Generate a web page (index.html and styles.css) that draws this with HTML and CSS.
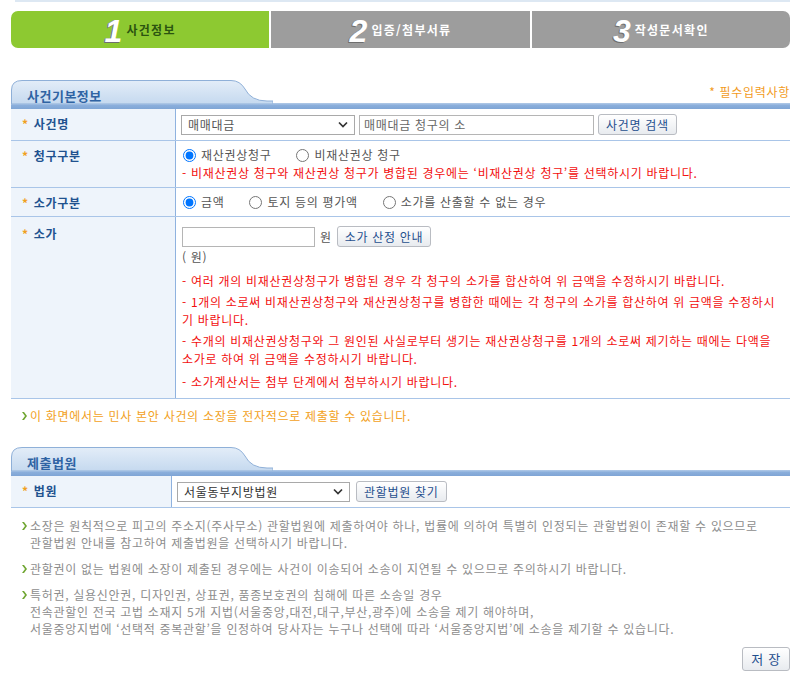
FILE: index.html
```html
<!DOCTYPE html>
<html lang="ko">
<head>
    <meta charset="UTF-8">
    <title>사건정보</title>
    <link rel="stylesheet" href="styles.css">
</head>
<body>
<div class="page">
    <div class="topline"></div>

    <div class="steps">
        <div class="step step-on"><span class="num">1</span><span class="step-label">사건정보</span></div>
        <div class="step"><span class="num">2</span><span class="step-label">입증/첨부서류</span></div>
        <div class="step"><span class="num">3</span><span class="step-label">작성문서확인</span></div>
    </div>

    <!-- 사건기본정보 -->
    <div class="sec-head">
        <svg class="tab-bg" width="262" height="24" viewBox="0 0 262 24">
            <defs>
                <linearGradient id="tabg" x1="0" y1="0" x2="0" y2="1">
                    <stop offset="0" stop-color="#e3edf8"/>
                    <stop offset="1" stop-color="#c5d9ef"/>
                </linearGradient>
            </defs>
            <path d="M0.5,24 L0.5,10 Q0.5,0.5 11,0.5 L220,0.5 Q229,0.5 234,9 Q240,21 256,21 L262,21 L262,24 Z" fill="url(#tabg)" stroke="#8fb0d8"/>
        </svg>
        <span class="tab-title">사건기본정보</span>
        <span class="required">* 필수입력사항</span>
    </div>
    <div class="sec-bar"></div>
    <table class="form">
        <tr>
            <th class="w1"><i>*</i>사건명</th>
            <td class="mid">
                <div class="line">
                    <div class="select s-case"><span>매매대금</span><svg width="10" height="7" viewBox="0 0 10 7"><path d="M1 1.5 L5 5.5 L9 1.5" fill="none" stroke="#333" stroke-width="1.7"/></svg></div>
                    <div class="input i-case">매매대금 청구의 소</div>
                    <button class="btn">사건명 검색</button>
                </div>
            </td>
        </tr>
        <tr>
            <th><i>*</i>청구구분</th>
            <td>
                <div class="line">
                    <label class="radio"><input type="radio" name="claim" checked>재산권상청구</label>
                    <label class="radio"><input type="radio" name="claim">비재산권상 청구</label>
                </div>
                <p class="warn">- 비재산권상 청구와 재산권상 청구가 병합된 경우에는 ‘비재산권상 청구’를 선택하시기 바랍니다.</p>
            </td>
        </tr>
        <tr>
            <th><i>*</i>소가구분</th>
            <td>
                <div class="line">
                    <label class="radio"><input type="radio" name="kind" checked>금액</label>
                    <label class="radio"><input type="radio" name="kind">토지 등의 평가액</label>
                    <label class="radio"><input type="radio" name="kind">소가를 산출할 수 없는 경우</label>
                </div>
            </td>
        </tr>
        <tr>
            <th class="top"><i>*</i>소가</th>
            <td class="amount">
                <div class="line">
                    <div class="input i-amount"></div>
                    <span class="unit">원</span>
                    <button class="btn">소가 산정 안내</button>
                </div>
                <p class="plain">( 원)</p>
                <p class="warn w-first">- 여러 개의 비재산권상청구가 병합된 경우 각 청구의 소가를 합산하여 위 금액을 수정하시기 바랍니다.</p>
                <p class="warn">- 1개의 소로써 비재산권상청구와 재산권상청구를 병합한 때에는 각 청구의 소가를 합산하여 위 금액을 수정하시기 바랍니다.</p>
                <p class="warn">- 수개의 비재산권상청구와 그 원인된 사실로부터 생기는 재산권상청구를 1개의 소로써 제기하는 때에는 다액을 소가로 하여 위 금액을 수정하시기 바랍니다.</p>
                <p class="warn w-last">- 소가계산서는 첨부 단계에서 첨부하시기 바랍니다.</p>
            </td>
        </tr>
    </table>

    <p class="note orange"><svg class="arr" width="5" height="8" viewBox="0 0 5 8"><path d="M0 0 H2 L5 4 L2 8 H0 L3 4 Z" fill="#6ea52f"/></svg>이 화면에서는 민사 본안 사건의 소장을 전자적으로 제출할 수 있습니다.</p>

    <!-- 제출법원 -->
    <div class="sec-head sec2">
        <svg class="tab-bg" width="262" height="24" viewBox="0 0 262 24">
            <path d="M0.5,24 L0.5,10 Q0.5,0.5 11,0.5 L220,0.5 Q229,0.5 234,9 Q240,21 256,21 L262,21 L262,24 Z" fill="url(#tabg)" stroke="#8fb0d8"/>
        </svg>
        <span class="tab-title">제출법원</span>
    </div>
    <div class="sec-bar"></div>
    <table class="form">
        <tr>
            <th class="w2"><i>*</i>법원</th>
            <td class="mid">
                <div class="line">
                    <div class="select s-court"><span>서울동부지방법원</span><svg width="10" height="7" viewBox="0 0 10 7"><path d="M1 1.5 L5 5.5 L9 1.5" fill="none" stroke="#333" stroke-width="1.7"/></svg></div>
                    <button class="btn">관할법원 찾기</button>
                </div>
            </td>
        </tr>
    </table>

    <div class="notes">
        <p class="note gray"><svg class="arr" width="5" height="8" viewBox="0 0 5 8"><path d="M0 0 H2 L5 4 L2 8 H0 L3 4 Z" fill="#6ea52f"/></svg><span>소장은 원칙적으로 피고의 주소지(주사무소) 관할법원에 제출하여야 하나, 법률에 의하여 특별히 인정되는 관할법원이 존재할 수 있으므로<br>관할법원 안내를 참고하여 제출법원을 선택하시기 바랍니다.</span></p>
        <p class="note gray"><svg class="arr" width="5" height="8" viewBox="0 0 5 8"><path d="M0 0 H2 L5 4 L2 8 H0 L3 4 Z" fill="#6ea52f"/></svg><span>관할권이 없는 법원에 소장이 제출된 경우에는 사건이 이송되어 소송이 지연될 수 있으므로 주의하시기 바랍니다.</span></p>
        <p class="note gray"><svg class="arr" width="5" height="8" viewBox="0 0 5 8"><path d="M0 0 H2 L5 4 L2 8 H0 L3 4 Z" fill="#6ea52f"/></svg><span>특허권, 실용신안권, 디자인권, 상표권, 품종보호권의 침해에 따른 소송일 경우<br>전속관할인 전국 고법 소재지 5개 지법(서울중앙,대전,대구,부산,광주)에 소송을 제기 해야하며,<br>서울중앙지법에 ‘선택적 중복관할’을 인정하여 당사자는 누구나 선택에 따라 ‘서울중앙지법’에 소송을 제기할 수 있습니다.</span></p>
    </div>

    <div class="actions">
        <button class="btn btn-save">저 장</button>
    </div>
</div>
</body>
</html>
```

FILE: styles.css
```css
body {
    margin: 0;
    font-family: "Noto Sans CJK KR", "Liberation Sans", sans-serif;
    font-size: 12px;
    letter-spacing: 0.7px;
    color: #555;
    background: #fff;
}

.page {
    padding: 0 10px 0 11px;
}

.topline {
    height: 2px;
    margin-left: 4px;
    background: #dde8f3;
}

/* steps */
.steps {
    display: flex;
    gap: 2px;
    height: 37px;
    margin-top: 9px;
}

.step {
    flex: 1;
    display: flex;
    align-items: center;
    justify-content: center;
    background: #9d9d9d;
    color: #fff;
}

.step:first-child {
    border-radius: 7px 0 0 7px;
}

.step:last-child {
    border-radius: 0 7px 7px 0;
}

.step-on {
    background: #8dc931;
}

.num {
    font-family: "Liberation Sans", sans-serif;
    font-weight: bold;
    font-style: italic;
    font-size: 32px;
    line-height: 1;
    letter-spacing: 0;
    color: #fff;
    text-shadow: -1px 1px 0 #6f6f6f, -1px 0 0 #8a8a8a;
    margin-right: 4px;
    margin-top: 2px;
}

.step-label {
    font-weight: bold;
    font-size: 12px;
    letter-spacing: 1.3px;
    color: #fff;
}

.step-on .step-label {
    color: #2b5410;
}

/* section header */
.sec-head {
    position: relative;
    display: flex;
    justify-content: space-between;
    height: 23px;
    margin-top: 32px;
}

.sec2 {
    margin-top: 22px;
}

.tab-bg {
    position: absolute;
    left: 0;
    top: 0;
}

.tab-title {
    position: relative;
    padding: 7px 0 0 16px;
    font-size: 13px;
    font-weight: bold;
    line-height: 18px;
    letter-spacing: 0.5px;
    color: #2f63a3;
}

.required {
    padding-top: 3px;
    color: #f29b1d;
    line-height: 18px;
}

.sec-bar {
    height: 6px;
    background: linear-gradient(#b3cbe8, #8aaedb 40%, #7fa5d5);
}

/* form table */
.form {
    width: 100%;
    border-collapse: collapse;
}

.form th {
    background: #eef4fb;
    border-bottom: 1px solid #a9c5e8;
    border-right: 1px solid #8fb2df;
    padding: 6px 0 4px 11px;
    text-align: left;
    vertical-align: top;
    font-weight: bold;
    font-size: 12px;
    line-height: 18px;
    color: #21528f;
}

.form th.w1 {
    width: 153px;
}

.form th.w2 {
    width: 149px;
}

.form th.top {
    padding-top: 8px;
}

.form th i {
    font-style: normal;
    color: #f0a020;
    margin-right: 5px;
}

.form td {
    border-bottom: 1px solid #a9c5e8;
    padding: 5px 6px 5px 6px;
    vertical-align: top;
    line-height: 18px;
}

.form td.mid {
    padding: 5px 5px 5px 5px;
}

.line {
    display: flex;
    align-items: center;
    gap: 4px;
    min-height: 18px;
}

.select {
    display: flex;
    align-items: center;
    justify-content: space-between;
    box-sizing: border-box;
    height: 20px;
    padding: 0 6px;
    border: 1px solid #a9a9a9;
    background: #fff;
    color: #555;
}

.s-case {
    width: 174px;
}

.s-court {
    width: 173px;
    color: #333;
    margin-right: 2px;
}

.input {
    box-sizing: border-box;
    height: 20px;
    padding: 0 4px;
    border: 1px solid #b5b5b5;
    background: #fff;
    line-height: 18px;
    color: #666;
}

.i-case {
    width: 235px;
}

.i-amount {
    width: 133px;
}

.unit {
    margin: 0 1px 0 1px;
}

.btn {
    height: 21px;
    padding: 0 7px;
    border: 1px solid #b9bcc2;
    border-radius: 3px;
    background: linear-gradient(#ffffff, #e8ebef);
    font-family: "Noto Sans CJK KR", sans-serif;
    font-size: 12px;
    letter-spacing: 0.7px;
    color: #1f4f8e;
    line-height: 18px;
    cursor: pointer;
}

.radio {
    display: inline-flex;
    align-items: center;
    margin-right: 20px;
}

.radio input {
    width: 13px;
    height: 13px;
    margin: 0 5px 0 1px;
}

.warn {
    margin: 0;
    color: #f20f0f;
}

.plain {
    margin: 1px 0 0;
}

.amount {
    padding-top: 9px !important;
    padding-bottom: 7px !important;
}

.amount .warn {
    margin-top: 3px;
}

.amount .w-first {
    margin-top: 6px;
}

.amount .w-last {
    margin-top: 5px;
}

/* notes */
.note {
    display: flex;
    align-items: flex-start;
    margin: 0;
    line-height: 18px;
}

.note .arr {
    flex: none;
    margin: 5px 3px 0 11px;
}

.orange {
    margin-top: 8px;
    color: #f2a124;
}

.notes {
    margin-top: 9px;
}

.gray {
    color: #8d8d8d;
    line-height: 17px;
    margin-bottom: 9px;
}

.gray .arr {
    margin-top: 5px;
}

.actions {
    display: flex;
    justify-content: flex-end;
    margin-top: 10px;
}

.btn-save {
    width: 48px;
    height: 24px;
    padding: 0;
    font-size: 13px;
}
```
